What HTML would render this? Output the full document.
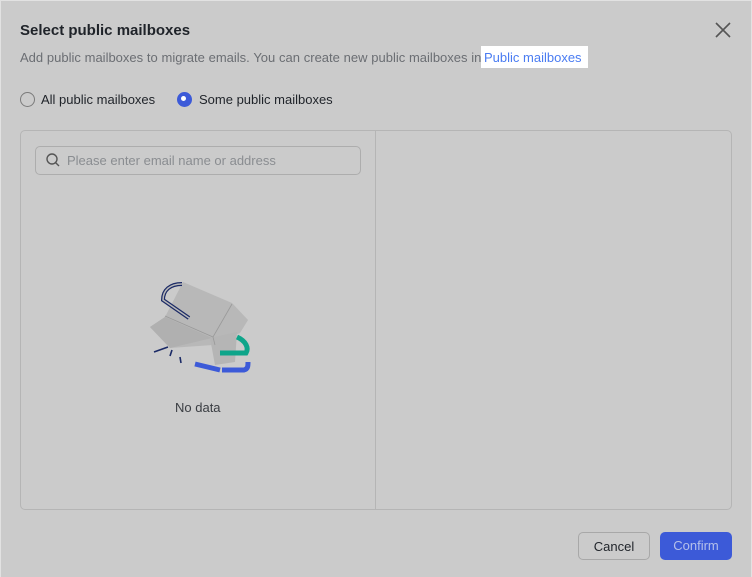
<!DOCTYPE html>
<html><head><style>
*{box-sizing:border-box;margin:0;padding:0}
body{width:752px;height:577px;background:#cbcbcb;font-family:"Liberation Sans",sans-serif;position:relative;overflow:hidden}
.a{position:absolute}
</style></head><body>
<div class="a" style="left:0;top:0;width:752px;height:577px;border:1px solid #e2e2e2;border-bottom:none"></div>
<div class="a" style="left:20px;top:22px;font-size:15px;font-weight:600;color:#1f2329">Select public mailboxes</div>
<svg class="a" style="left:715px;top:22px" width="16" height="16" viewBox="0 0 16 16"><path d="M1 1L15 15M15 1L1 15" stroke="#555" stroke-width="1.6"/></svg>
<div class="a" style="left:20px;top:50px;font-size:13px;color:#6b6e73;word-spacing:0.15px">Add public mailboxes to migrate emails. You can create new public mailboxes in</div>
<div class="a" style="left:481px;top:46px;width:107px;height:22px;background:#fff;font-size:13px;color:#4a7cf2;padding:4px 0 0 3px">Public mailboxes</div>
<div class="a" style="left:20px;top:92px;width:15px;height:15px;border:1px solid #7b7b7b;border-radius:50%"></div>
<div class="a" style="left:41px;top:92px;font-size:13px;color:#1f2329">All public mailboxes</div>
<div class="a" style="left:177px;top:92px;width:15px;height:15px;border-radius:50%;background:#3c5ad8;border:4.5px solid #3c5ad8"><div style="width:5px;height:5px;background:#fff;border-radius:50%"></div></div>
<div class="a" style="left:199px;top:92px;font-size:13px;color:#1f2329">Some public mailboxes</div>
<div class="a" style="left:20px;top:130px;width:712px;height:380px;border:1px solid #b5b5b5;border-radius:5px"></div>
<div class="a" style="left:375px;top:131px;width:1px;height:378px;background:#b5b5b5"></div>
<div class="a" style="left:35px;top:146px;width:326px;height:29px;border:1px solid #adadad;border-radius:5px"></div>
<svg class="a" style="left:45px;top:152px" width="16" height="16" viewBox="0 0 16 16"><circle cx="7" cy="7" r="5" fill="none" stroke="#555" stroke-width="1.4"/><path d="M10.7 10.7L14 14" stroke="#555" stroke-width="1.4"/></svg>
<div class="a" style="left:67px;top:153px;font-size:13px;color:#8a8d91">Please enter email name or address</div>
<svg class="a" style="left:140px;top:270px" width="120" height="120" viewBox="0 0 120 120">
<path d="M43 12L92 33L108 50L100 63L73 75L30 78L10 57L25 47Z" fill="#b8b8b8"/>
<path d="M10 57L25 47L72 68L30 78Z" fill="#b0b0b0"/>
<path d="M70 68L97 62L95 92L75 95Z" fill="#b5b5b5"/>
<path d="M25 46L73 67L92 34M73 67L75 75" stroke="#999" stroke-width="0.8" fill="none"/>
<path d="M42 14C30 14 23 20 23 30L49 48" stroke="#1b2a66" stroke-width="4" fill="none"/>
<path d="M42 14C30 14 23 20 23 30L49 48" stroke="#b8b8b8" stroke-width="1.5" fill="none"/>
<path d="M97 67C106 71 109 78 106 83L80 83" stroke="#0ea58a" stroke-width="5" fill="none"/>
<path d="M55 94L80 100" stroke="#3c5ad8" stroke-width="5"/>
<path d="M82 100L104 100C108 99 108 96 108 92" stroke="#3c5ad8" stroke-width="5" fill="none"/>
<path d="M14 82L28 77M30 86L32 80M41 93L40 87" stroke="#1b2a66" stroke-width="1.6"/>
</svg>
<div class="a" style="left:175px;top:400px;font-size:13px;color:#3a3d42">No data</div>
<div class="a" style="left:578px;top:532px;width:72px;height:28px;border:1px solid #a8a8a8;border-radius:5px;font-size:13px;color:#1f2329;text-align:center;line-height:27px">Cancel</div>
<div class="a" style="left:660px;top:532px;width:72px;height:28px;background:#3c5ad8;border-radius:5px;font-size:13px;color:#b5c0ea;text-align:center;line-height:28px">Confirm</div>
</body></html>
